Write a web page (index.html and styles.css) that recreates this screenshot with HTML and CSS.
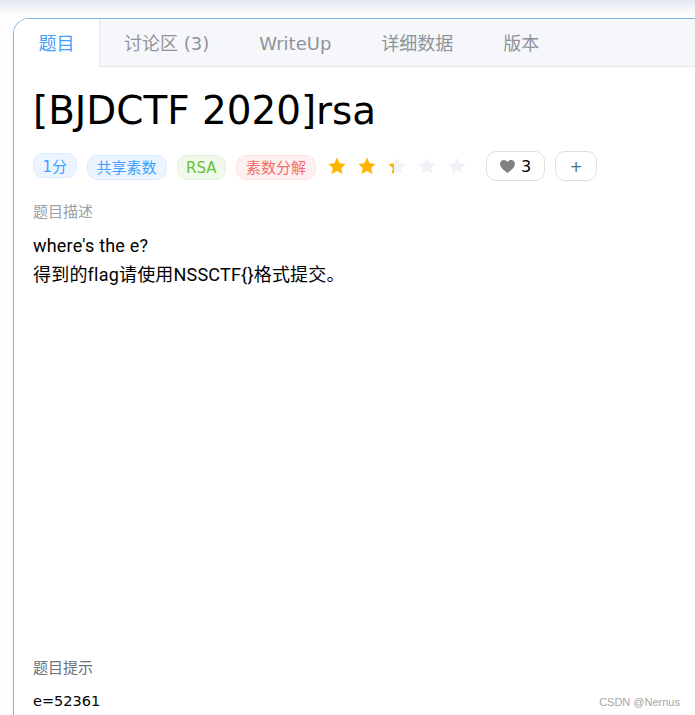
FILE: index.html
```html
<!DOCTYPE html>
<html lang="en">
<head>
    <meta charset="UTF-8">
    <meta name="viewport" content="width=device-width, initial-scale=1.0">
    <title>[BJDCTF 2020]rsa</title>
    <link rel="stylesheet" href="styles.css">
</head>
<body>
    <div class="card">
        <div class="tabs">
            <div class="tab active">题目</div>
            <div class="tab">讨论区 (3)</div>
            <div class="tab">WriteUp</div>
            <div class="tab">详细数据</div>
            <div class="tab">版本</div>
        </div>

        <div class="content">
            <h1>[BJDCTF 2020]rsa</h1>

            <div class="meta-row">
                <span class="tag tag-score">1分</span>
                <span class="tag tag-blue">共享素数</span>
                <span class="tag tag-green">RSA</span>
                <span class="tag tag-red">素数分解</span>

                <div class="stars">
                    <svg class="star" viewBox="0 0 18 18"><path class="on" d="M9 .6l2.6 5.6 6.1.7-4.5 4.2 1.2 6-5.400-3-5.400 3 1.200-6L.3 6.900l6.100-.7z"/></svg>
                    <svg class="star" viewBox="0 0 18 18"><path class="on" d="M9 .6l2.6 5.6 6.1.7-4.5 4.2 1.2 6-5.400-3-5.400 3 1.200-6L.3 6.900l6.100-.7z"/></svg>
                    <svg class="star" viewBox="0 0 18 18">
                        <defs>
                            <linearGradient id="partStar">
                                <stop offset="0.3" stop-color="#ffb400"/>
                                <stop offset="0.3" stop-color="#eff2f7"/>
                            </linearGradient>
                        </defs>
                        <path fill="url(#partStar)" d="M9 .6l2.6 5.6 6.1.7-4.5 4.2 1.2 6-5.400-3-5.400 3 1.200-6L.3 6.900l6.100-.7z"/>
                    </svg>
                    <svg class="star" viewBox="0 0 18 18"><path class="off" d="M9 .6l2.6 5.6 6.1.7-4.5 4.2 1.2 6-5.400-3-5.400 3 1.200-6L.3 6.900l6.100-.7z"/></svg>
                    <svg class="star" viewBox="0 0 18 18"><path class="off" d="M9 .6l2.6 5.6 6.1.7-4.5 4.2 1.2 6-5.400-3-5.400 3 1.200-6L.3 6.900l6.100-.7z"/></svg>
                </div>

                <button class="btn btn-like">
                    <svg class="heart" viewBox="0 0 16 14"><path d="M8 14C3 10 0 7.600 0 4.200 0 1.800 1.800 0 4.100 0 5.700 0 7.200.8 8 2.100 8.800.8 10.300 0 11.900 0 14.200 0 16 1.800 16 4.200 16 7.600 13 10 8 14z"/></svg>
                    <span>3</span>
                </button>
                <button class="btn btn-add">+</button>
            </div>

            <div class="section-label">题目描述</div>
            <div class="description">
                <p>where's the e?</p>
                <p>得到的flag请使用NSSCTF{}格式提交。</p>
            </div>

            <div class="hint-label">题目提示</div>
            <div class="hint">e=52361</div>
        </div>
    </div>

    <div class="watermark">CSDN @Nernus</div>
</body>
</html>
```

FILE: styles.css
```css
* {
    margin: 0;
    padding: 0;
    box-sizing: border-box;
}

html, body {
    height: 100%;
    overflow: hidden;
}

body {
    position: relative;
    background: linear-gradient(#e3e7f0, #fbfbfc 14px, #fdfdfd 18px);
    padding: 18px 0 0 13px;
    font-family: "DejaVu Sans", "Noto Sans CJK SC", sans-serif;
}

.card {
    height: 100%;
    background: #fff;
    border-top: 1px solid #7fb5ea;
    border-left: 1px solid #7fb5ea;
    border-radius: 16px 0 0 0;
    overflow: hidden;
}

.tabs {
    display: flex;
    height: 48px;
    background: #f5f7fa;
    border-bottom: 1px solid #e4e7ed;
}

.tab {
    padding: 0 25px;
    line-height: 50px;
    font-size: 18px;
    color: #909399;
}

.tab.active {
    width: 86px;
    padding: 0;
    text-align: center;
    color: #409eff;
    background: #fff;
    border-right: 1px solid #e4e7ed;
    border-bottom: 1px solid #fff;
    height: 48px;
}

.tab.active + .tab {
    padding-left: 24px;
}

.content {
    padding: 0 19px;
}

h1 {
    margin-top: 17px;
    font-size: 38.9px;
    font-weight: 400;
    line-height: 54px;
    color: #000;
}

.meta-row {
    display: flex;
    align-items: flex-start;
    gap: 10px;
    margin-top: 13px;
    height: 30px;
}

.tag {
    margin-top: 4px;
    height: 25px;
    padding: 0 9px;
    border: 1px solid;
    border-radius: 10px;
    font-size: 15px;
    line-height: 24px;
    white-space: nowrap;
}

.tag-score {
    margin-top: 2px;
    padding: 0 8.500px;
    line-height: 26px;
    color: #409eff;
    background: #ecf5ff;
    border-color: #d9ecff;
}

.tag-blue {
    color: #409eff;
    background: #ecf5ff;
    border-color: #d9ecff;
}

.tag-green {
    padding: 0 8.500px;
    color: #67c23a;
    background: #f0f9eb;
    border-color: #e1f3d8;
}

.tag-red {
    color: #f56c6c;
    background: #fef0f0;
    border-color: #fde2e2;
}

.stars {
    display: flex;
    gap: 12px;
    margin: 6px 0 0 2px;
}

.star {
    width: 18px;
    height: 18px;
}

.star .on {
    fill: #ffb400;
}

.star .off {
    fill: #eff2f7;
}

.btn {
    height: 30px;
    background: #fff;
    border: 1px solid #dcdfe6;
    border-radius: 10px;
    font-family: inherit;
    color: #000;
}

.btn-like {
    display: flex;
    align-items: center;
    justify-content: center;
    gap: 6px;
    width: 59px;
    margin-left: 10px;
    font-size: 16px;
}

.heart {
    width: 15px;
    height: 13px;
    fill: #808080;
}

.btn-add {
    width: 42px;
    padding-top: 2px;
    font-size: 15px;
    color: #3f6f94;
}

.section-label {
    margin-top: 21px;
    font-size: 15px;
    line-height: 20px;
    color: #99a2aa;
}

.description {
    margin-top: 9px;
    font-family: "Roboto", "Noto Sans CJK SC", sans-serif;
    font-size: 18px;
    letter-spacing: 0.2px;
    line-height: 29px;
    color: #000;
}

.hint-label {
    margin-top: 369px;
    font-size: 15px;
    line-height: 20px;
    color: #6b7280;
}

.hint {
    margin-top: 13px;
    font-size: 14.5px;
    line-height: 20px;
    color: #000;
}

.watermark {
    position: absolute;
    right: 15px;
    bottom: 7px;
    font-family: "Liberation Sans", sans-serif;
    font-size: 11px;
    color: #a6a6a6;
}
```
